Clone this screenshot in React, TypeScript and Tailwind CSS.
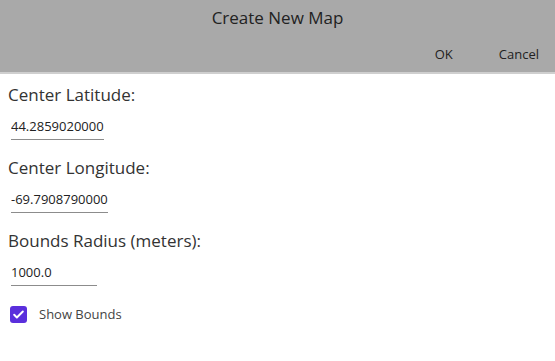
import React from "react";

function Field({ label, value, width }: { label: string; value: string; width: string }) {
  return (
    <div className="flex flex-col">
      <div className="text-[17px] leading-[24px] text-[#333333]">{label}</div>
      <input
        readOnly
        value={value}
        className={`mt-[9px] ml-[3px] h-[24px] pb-[3px] px-0 border-b border-[#8c8c8c] bg-transparent text-[13px] leading-[20px] text-[#222222] outline-none ${width}`}
        style={{ fontFamily: '"Open Sans", sans-serif' }}
      />
    </div>
  );
}

export default function App() {
  return (
    <div className="w-[555px] h-[361px] bg-white overflow-hidden" style={{ fontFamily: '"Open Sans", sans-serif' }}>
      <div className="h-[72px] bg-[#a9a9a9] flex flex-col">
        <div className="pt-[6px] text-center text-[17px] leading-[24px] text-[#222222]">Create New Map</div>
        <div className="mt-[14px] flex justify-end gap-[46px] pr-[16px] text-[13px] leading-[20px] text-[#222222]">
          <span>OK</span>
          <span>Cancel</span>
        </div>
      </div>
      <div className="h-[2px] bg-[#cfcfcf]" />
      <div className="pl-[8px] pt-[9px] flex flex-col gap-[16px]">
        <Field label="Center Latitude:" value="44.2859020000" width="w-[93px]" />
        <Field label="Center Longitude:" value="-69.7908790000" width="w-[97px]" />
        <Field label="Bounds Radius (meters):" value="1000.0" width="w-[86px]" />
        <div className="flex items-center ml-[2px] mt-[2px]">
          <div className="w-[17px] h-[17px] rounded-[3px] bg-[#5a2fdc] flex items-center justify-center">
            <svg width="13" height="13" viewBox="0 0 24 24" fill="none" stroke="white" strokeWidth="3.6" strokeLinecap="round" strokeLinejoin="round">
              <path d="M4 12.5l5 5L20 6.5" />
            </svg>
          </div>
          <span className="ml-[12px] text-[13px] leading-[20px] text-[#444444]">Show Bounds</span>
        </div>
      </div>
    </div>
  );
}
